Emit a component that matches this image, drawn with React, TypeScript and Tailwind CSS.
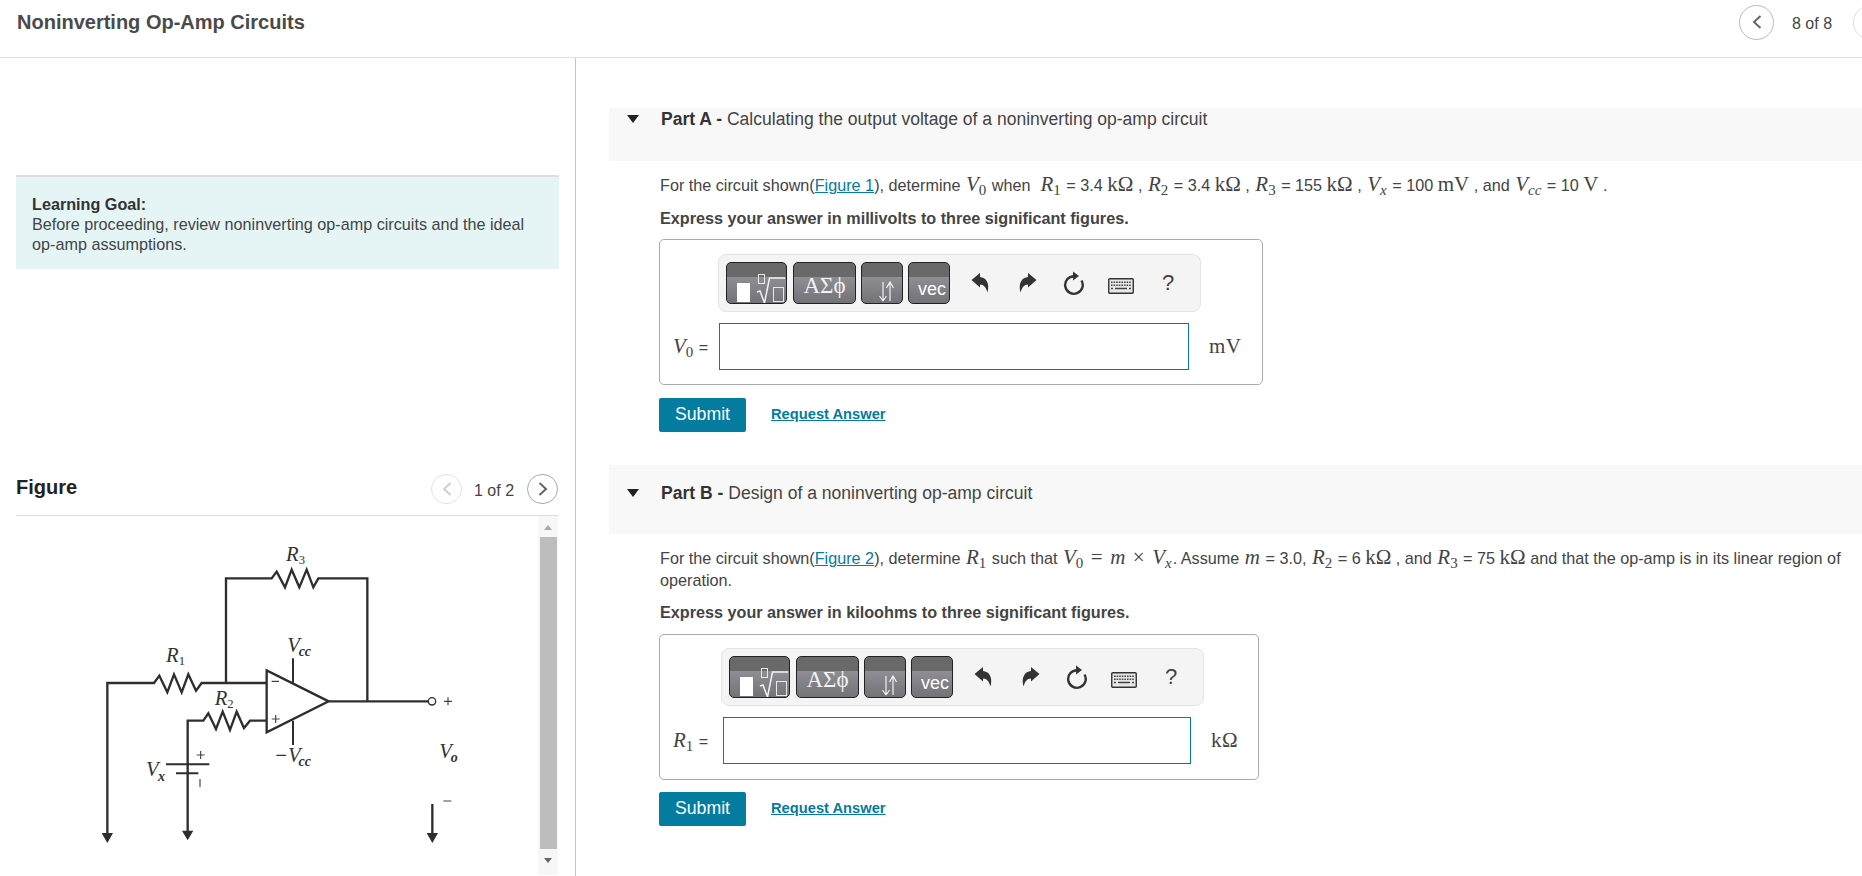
import React from "react";

const serif = "font-['Liberation_Serif',serif]";

function Sym({ c, s, it }: { c: string; s?: string; it?: boolean }) {
  return (
    <span className="font-['Liberation_Serif',serif] text-[21px] leading-none mx-[1px]">
      <i>{c}</i>
      {s && <span className={`text-[15px] leading-[0] align-[-4px] ${it ? "italic" : ""}`}>{s}</span>}
    </span>
  );
}
function Rm({ c, gap }: { c: string; gap?: boolean }) {
  return <span className={`font-['Liberation_Serif',serif] text-[21px] leading-none ${gap ? "mx-[2px]" : ""}`}>{c}</span>;
}

function Chevron({ dir, color }: { dir: "l" | "r"; color: string }) {
  return (
    <svg width="12" height="16" viewBox="0 0 12 16" fill="none">
      <path d={dir === "l" ? "M9.5 2 L3 8 L9.5 14" : "M2.5 2 L9 8 L2.5 14"} stroke={color} strokeWidth="2" />
    </svg>
  );
}

function Triangle() {
  return <div className="w-0 h-0 border-l-[6.5px] border-r-[6.5px] border-t-[8px] border-l-transparent border-r-transparent border-t-[#222]" />;
}

function TemplateIcon() {
  return (
    <svg width="61" height="42" viewBox="0 0 61 42" className="absolute left-0 top-0" fill="none">
      <rect x="10" y="20" width="13" height="19" fill="#fff" />
      <rect x="31.5" y="11.5" width="6" height="9" stroke="#e8e8e8" strokeWidth="1" />
      <path d="M30 29 L33 28 L37.5 40 L42.5 15 H58" stroke="#f2f2f2" strokeWidth="1.5" />
      <rect x="46.5" y="24.5" width="10" height="14" stroke="#e8e8e8" strokeWidth="1" />
    </svg>
  );
}

function ArrowsIcon() {
  return (
    <svg width="42" height="42" viewBox="0 0 42 42" className="absolute left-0 top-0" fill="none" stroke="#f2f2f2" strokeWidth="1.2">
      <path d="M21 19 V37 M17.5 33 L21 38 M24.5 33 L21 38" />
      <path d="M28 38 V20 M24.5 25 L28 19 L31.5 25" />
    </svg>
  );
}

function Undo({ flip }: { flip?: boolean }) {
  return (
    <svg width="20" height="22" viewBox="0 0 20 22" className={flip ? "-scale-x-100" : ""}>
      <path d="M1.5 8 L10 1 V5 C16 5.5 20 11 17.5 20.5 C16 15.5 14 12.5 10 12.5 V15.5 Z" fill="#333" />
    </svg>
  );
}

function Reload() {
  return (
    <svg width="24" height="26" viewBox="0 0 24 26" fill="none">
      <path d="M12 6.2 A 8.8 8.8 0 1 0 19.5 10.5" stroke="#333" strokeWidth="2.4" />
      <path d="M11 1.5 L17 6 L11 10.5 Z" fill="#333" />
    </svg>
  );
}

function Keyboard() {
  return (
    <svg width="26" height="16" viewBox="0 0 26 16" fill="none">
      <rect x="0.75" y="0.75" width="24.5" height="14.5" rx="1" fill="#e8e8e8" stroke="#333" strokeWidth="1.4" />
      <path d="M3 4.2 H23 M3 7.2 H23" stroke="#444" strokeWidth="1.4" strokeDasharray="1.6 1" />
      <path d="M3 10.5 H5 M7 10.5 H19 M21 10.5 H23" stroke="#444" strokeWidth="1.4" />
    </svg>
  );
}

function ToolBtn({ w, children }: { w: string; children: React.ReactNode }) {
  return (
    <div className={`relative h-[42px] ${w} rounded-[5px] border border-[#222] bg-[linear-gradient(#696969_0,#696969_14px,#8e8e94_14px,#727277_100%)] overflow-hidden shrink-0`}>
      {children}
    </div>
  );
}

function Toolbar() {
  return (
    <div className="flex items-center w-[483px] h-[58px] rounded-[8px] border border-[#e4e4e4] bg-[#f4f4f4] pl-[7px]">
      <ToolBtn w="w-[61px]"><TemplateIcon /></ToolBtn>
      <div className="ml-[6px]">
        <ToolBtn w="w-[63px]">
          <div className={`${serif} pt-[10px] text-center text-[23px] leading-[26px] text-[#f2f2f2] whitespace-nowrap`}>ΑΣϕ</div>
        </ToolBtn>
      </div>
      <div className="ml-[5px]"><ToolBtn w="w-[42px]"><ArrowsIcon /></ToolBtn></div>
      <div className="ml-[5px]">
        <ToolBtn w="w-[42px]">
          <div className="pt-[15px] pl-[9px] text-[18px] leading-[22px] text-white">vec</div>
        </ToolBtn>
      </div>
      <div className="ml-[20px] w-[20px]"><Undo /></div>
      <div className="ml-[28px] w-[20px]"><Undo flip /></div>
      <div className="ml-[24px] w-[24px]"><Reload /></div>
      <div className="ml-[22px] mt-[6px] w-[26px]"><Keyboard /></div>
      <div className="ml-[27px] w-[14px] text-center text-[22px] leading-[24px] text-[#444]">?</div>
    </div>
  );
}

function Circuit() {
  const wire = { stroke: "#2e2e2e", strokeWidth: 7, fill: "none", strokeLinejoin: "miter" as const };
  const label = { fontFamily: "'Liberation Serif', serif", fontStyle: "italic", fill: "#333" };
  return (
    <svg width="400" height="346" viewBox="0 0 1200 1038" className="block">
      <path {...wire} d="M408 462 V148 H545 L560 128 L585 175 L605 122 L628 175 L650 122 L670 175 L685 148 H832 V517" />
      <path {...wire} d="M52 925 V462 H192 L208 440 L232 490 L252 436 L275 490 L295 436 L318 485 L335 462 H530" />
      <path {...wire} d="M293 920 V575 H340 L355 553 L378 600 L398 548 L420 603 L440 548 L462 597 L480 575 H530" />
      <path {...wire} d="M530 424 V610 L716 517 Z" />
      <path {...wire} d="M716 517 H1015" />
      <circle cx="1026" cy="517" r="11" fill="#fff" stroke="#2e2e2e" strokeWidth="4" />
      <path {...wire} d="M609 388 V462 M609 575 V648" strokeWidth={6} />
      <path {...wire} d="M228 706 H358 M258 733 H325" strokeWidth={6} />
      <path {...wire} d="M1027 825 V920" />
      <path d="M35 912 H69 L52 942 Z M276 905 H310 L293 934 Z M1010 912 H1044 L1027 942 Z" fill="#2e2e2e" />
      <path d="M1062 517 H1086 M1074 505 V529 M320 678 H344 M332 666 V690 M545 570 H569 M557 558 V582" stroke="#444" strokeWidth="3.5" fill="none" />
      <path d="M545 457 H567 M1060 816 H1084 M330 750 V774" stroke="#444" strokeWidth="3.5" fill="none" />
      <text {...label} x="588" y="96" fontSize="62">R<tspan fontSize="38" dy="10" fontStyle="normal">3</tspan></text>
      <text {...label} x="228" y="398" fontSize="62">R<tspan fontSize="38" dy="10" fontStyle="normal">1</tspan></text>
      <text {...label} x="374" y="528" fontSize="62">R<tspan fontSize="38" dy="10" fontStyle="normal">2</tspan></text>
      <text {...label} x="592" y="370" fontSize="62">V<tspan fontSize="42" dy="12" dx="-4" fontWeight="bold">cc</tspan></text>
      <text {...label} x="552" y="698" fontSize="62">−V<tspan fontSize="42" dy="12" dx="-6" fontWeight="bold">cc</tspan></text>
      <text {...label} x="168" y="742" fontSize="62">V<tspan fontSize="42" dy="14" dx="-2" fontWeight="bold">x</tspan></text>
      <text {...label} x="1048" y="688" fontSize="62">V<tspan fontSize="42" dy="12" dx="-4" fontWeight="bold">o</tspan></text>
    </svg>
  );
}

function Actions() {
  return (
    <div className="flex items-center mt-[13px]">
      <button className="w-[87px] h-[34px] rounded-[2px] bg-[#037c9f] text-white text-[17.7px] leading-[32px] pb-[2px]">Submit</button>
      <a className="ml-[25px] -mt-[2px] text-[14.7px] font-bold text-[#037c9f] underline">Request Answer</a>
    </div>
  );
}

export default function App() {
  return (
    <div className="w-[1862px] h-[876px] overflow-hidden bg-white font-['Liberation_Sans',Arial,sans-serif] text-[#444] text-[16.2px]">
      <header className="flex items-center h-[58px] border-b border-[#e0e0e0] pl-[17px] pb-[13px]">
        <h1 className="text-[20px] leading-[24px] font-bold text-[#4a4a4a]">Noninverting Op-Amp Circuits</h1>
        <div className="ml-auto mr-[-26px] flex items-center">
          <div className="w-[35px] h-[35px] rounded-full border border-[#bbb] flex items-center justify-center"><Chevron dir="l" color="#666" /></div>
          <span className="ml-[18px] mt-[4px] w-[43px] text-[16px] whitespace-nowrap">8 of 8</span>
          <div className="ml-[18px] w-[35px] h-[35px] rounded-full border border-[#e0e0e0]" />
        </div>
      </header>

      <div className="flex h-[818px]">
        <aside className="w-[576px] shrink-0 border-r border-[#b4c9e6]">
          <div className="ml-[16px] mt-[117px] w-[543px] h-[94px] border-t-2 border-[#dddddd] bg-[#e5f5f5] pl-[16px] pt-[17px] leading-[20px]">
            <div className="font-bold text-[#333]">Learning Goal:</div>
            <div>Before proceeding, review noninverting op-amp circuits and the ideal <span className="whitespace-nowrap">op-amp</span> assumptions.</div>
          </div>
          <div className="ml-[16px] mt-[206px] w-[542px]">
            <div className="flex items-center h-[41px] border-b border-[#dddddd] pb-[12px]">
              <div className="text-[20px] leading-[24px] font-bold text-[#222] -mt-[4px]">Figure</div>
              <div className="ml-auto flex items-center">
                <div className="w-[31px] h-[30px] rounded-full border border-[#e2e2e2] flex items-center justify-center"><Chevron dir="l" color="#cfcfcf" /></div>
                <span className="ml-[12px] mt-[3px] w-[41px] whitespace-nowrap text-[16px]">1 of 2</span>
                <div className="ml-[12px] w-[31px] h-[30px] rounded-full border border-[#aaa] flex items-center justify-center"><Chevron dir="r" color="#666" /></div>
              </div>
            </div>
            <div className="flex h-[359px]">
              <div className="flex-1 pl-[74px] pt-[13px]"><Circuit /></div>
              <div className="w-[20px] flex flex-col items-center bg-[#f7f7f7]">
                <div className="mt-[9px] w-0 h-0 border-l-[4px] border-r-[4px] border-b-[5px] border-l-transparent border-r-transparent border-b-[#aaa]" />
                <div className="mt-[7px] w-[17px] h-[312px] bg-[#bdbdbd]" />
                <div className="mt-[9px] w-0 h-0 border-l-[4px] border-r-[4px] border-t-[5px] border-l-transparent border-r-transparent border-t-[#666]" />
              </div>
            </div>
          </div>
        </aside>

        <main className="flex-1 pl-[33px]">
          {/* Part A */}
          <section className="mt-[50px]">
            <div className="flex h-[53px] bg-[#f8f8f8]">
              <div className="ml-[18px] mt-[7px]"><Triangle /></div>
              <div className="ml-[22px] text-[17.55px] leading-[22px] text-[#444]"><b className="text-[#333]">Part A - </b>Calculating the output voltage of a noninverting op-amp circuit</div>
            </div>
            <div className="ml-[50px]">
              <p className="pl-[1px] mt-[13px] leading-[22px] whitespace-nowrap">
                For the circuit shown(<a className="text-[#037c9f] underline">Figure 1</a>), determine <Sym c="V" s="0" /> when &nbsp;<Sym c="R" s="1" /> = 3.4 <Rm c="kΩ" /> , <Sym c="R" s="2" /> = 3.4 <Rm c="kΩ" /> , <Sym c="R" s="3" /> = 155 <Rm c="kΩ" /> , <Sym c="V" s="x" it /> = 100 <Rm c="mV" /> , and <Sym c="V" s="cc" it /> = 10 <Rm c="V" /> .
              </p>
              <p className="pl-[1px] mt-[11px] leading-[22px] font-bold">Express your answer in millivolts to three significant figures.</p>
              <div className="mt-[10px] w-[604px] h-[146px] rounded-[5px] border border-[#aaaaaa] pt-[14px]">
                <div className="ml-[58px]"><Toolbar /></div>
                <div className="mt-[11px] flex items-center">
                  <div className="ml-[12px] mt-[1px] w-[47px] whitespace-nowrap"><Sym c="V" s="0" /> =</div>
                  <div className="w-[470px] h-[47px] border border-[#037c9f] bg-white" />
                  <div className="ml-[20px] mt-[1px] tracking-[0.5px]"><Rm c="mV" /></div>
                </div>
              </div>
              <Actions />
            </div>
          </section>

          {/* Part B */}
          <section className="mt-[33px]">
            <div className="flex h-[69px] bg-[#f8f8f8] pt-[17px]">
              <div className="ml-[18px] mt-[7px]"><Triangle /></div>
              <div className="ml-[22px] text-[17.55px] leading-[22px] text-[#444]"><b className="text-[#333]">Part B - </b>Design of a noninverting op-amp circuit</div>
            </div>
            <div className="ml-[50px]">
              <p className="pl-[1px] mt-[13px] w-[1195px] leading-[22px]">
                For the circuit shown(<a className="text-[#037c9f] underline">Figure 2</a>), determine <Sym c="R" s="1" /> such that <Sym c="V" s="0" /> <Rm c="=" gap /> <Sym c="m" /> <Rm c="×" gap /> <Sym c="V" s="x" it />. Assume <Sym c="m" /> = 3.0, <Sym c="R" s="2" /> = 6 <Rm c="kΩ" /> , and <Sym c="R" s="3" /> = 75 <Rm c="kΩ" /> and that the op-amp is in its linear region of operation.
              </p>
              <p className="pl-[1px] mt-[10px] leading-[22px] font-bold">Express your answer in kiloohms to three significant figures.</p>
              <div className="mt-[11px] w-[600px] h-[146px] rounded-[5px] border border-[#aaaaaa] pt-[13px]">
                <div className="ml-[61px]"><Toolbar /></div>
                <div className="mt-[11px] flex items-center">
                  <div className="ml-[12px] mt-[1px] w-[51px] whitespace-nowrap"><Sym c="R" s="1" /> =</div>
                  <div className="w-[468px] h-[47px] border border-[#037c9f] bg-white" />
                  <div className="ml-[20px] mt-[1px] tracking-[0.5px]"><Rm c="kΩ" /></div>
                </div>
              </div>
              <div className="-mt-[1px]"><Actions /></div>
            </div>
          </section>
        </main>
      </div>
    </div>
  );
}
